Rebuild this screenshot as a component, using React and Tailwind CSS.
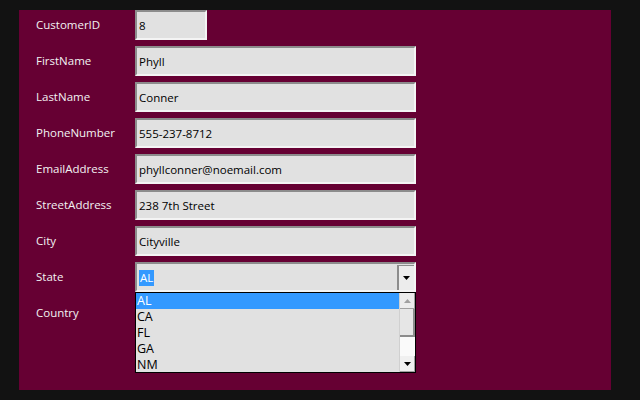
import React from 'react';

const fields = [
  { label: 'CustomerID', value: '8', narrow: true },
  { label: 'FirstName', value: 'Phyll' },
  { label: 'LastName', value: 'Conner' },
  { label: 'PhoneNumber', value: '555-237-8712' },
  { label: 'EmailAddress', value: 'phyllconner@noemail.com' },
  { label: 'StreetAddress', value: '238 7th Street' },
  { label: 'City', value: 'Cityville' },
];

const states = ['AL', 'CA', 'FL', 'GA', 'NM'];

const boxClasses =
  'h-[30px] bg-[#e1e1e1] border-2 border-t-[#8c8c8c] border-l-[#8c8c8c] border-b-[#f4f4f4] border-r-[#f4f4f4] flex items-center pl-[2px] pt-[1px] text-[11.5px] text-black';

function Arrow({ up, color = '#000' }) {
  return (
    <svg width="7" height="4" viewBox="0 0 7 4">
      <path d={up ? 'M0 4 L3.5 0 L7 4 Z' : 'M0 0 L7 0 L3.5 4 Z'} fill={color} />
    </svg>
  );
}

function Row({ label, children }) {
  return (
    <div className="flex items-center h-[30px]">
      <div className="w-[99px] text-[11.5px] text-[#f2f2f2]">{label}</div>
      {children}
    </div>
  );
}

export default function App() {
  return (
    <div
      className="w-[640px] h-[400px] bg-[#121212] pt-[10px] pl-[19px]"
      style={{ fontFamily: '"Open Sans", "Noto Sans", sans-serif' }}
    >
      <div className="w-[592px] h-[380px] bg-[#660033] pl-[17px] flex flex-col gap-[6px]">
        {fields.map((f) => (
          <Row key={f.label} label={f.label}>
            <div className={`${boxClasses} ${f.narrow ? 'w-[72px]' : 'w-[281px]'}`}>{f.value}</div>
          </Row>
        ))}

        <Row label="State">
          <div className="relative">
            <div className={`${boxClasses} w-[281px] justify-between pr-0`}>
              <span className="bg-[#3399ff] text-white px-[1px] leading-[16px]">AL</span>
              <div className="w-[17px] h-full border-l-2 border-l-[#8c8c8c] border-t border-t-[#8c8c8c] flex items-center justify-center bg-[#ececec]">
                <Arrow />
              </div>
            </div>

            <div className="absolute left-0 top-[30px] w-[281px] h-[81px] border border-black bg-[#e1e1e1] flex z-10">
              <div className="flex-1 flex flex-col">
                {states.map((s, i) => (
                  <div
                    key={s}
                    className={`h-[16px] leading-[16px] pl-[1px] text-[12.5px] ${i === 0 ? 'bg-[#3399ff] text-white' : 'text-black'}`}
                  >
                    {s}
                  </div>
                ))}
              </div>
              <div className="w-[16px] flex flex-col bg-[#f4f4f4] border-l border-[#d0d0d0]">
                <div className="h-[16px] flex items-center justify-center bg-[#ececec] border-b border-r border-[#a0a0a0]">
                  <Arrow up color="#a0a0a0" />
                </div>
                <div className="h-[28px] bg-[#e6e6e6] border-r-2 border-b-2 border-[#8c8c8c]" />
                <div className="flex-1 bg-[#fafafa]" />
                <div className="h-[16px] flex items-center justify-center bg-[#f0f0f0] border-r border-b border-[#a0a0a0]">
                  <Arrow />
                </div>
              </div>
            </div>
          </div>
        </Row>

        <Row label="Country">
          <div className={`${boxClasses} w-[281px]`} />
        </Row>
      </div>
    </div>
  );
}
